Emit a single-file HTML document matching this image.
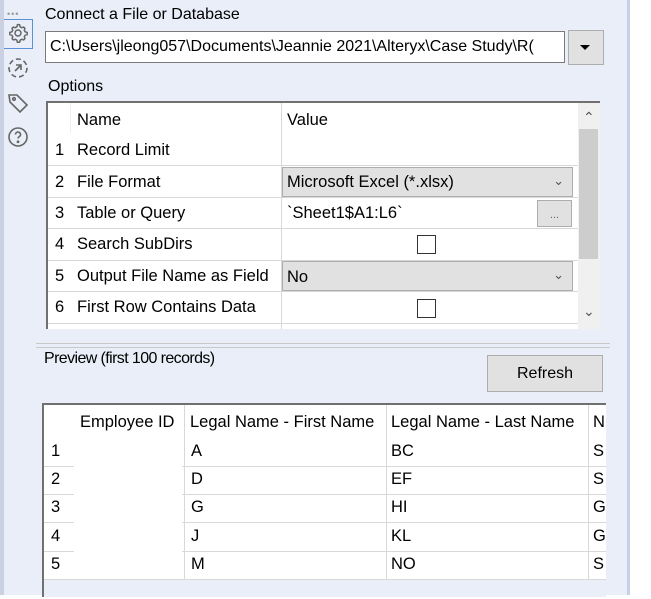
<!DOCTYPE html>
<html><head><style>
body{margin:0;width:651px;height:599px;background:#fff;font-family:"Liberation Sans",sans-serif;font-size:16.5px;color:#000;position:relative;overflow:hidden}
.a{position:absolute}
.bg{left:0;top:0;width:628px;height:595px;background:#e9eef8}
.cell{position:absolute;white-space:nowrap}
.hl{position:absolute;height:1px;background:#d8d8d8}
.vl{position:absolute;width:1px;background:#d8d8d8}
.cb{position:absolute;width:17px;height:17px;border:1px solid #333;background:#fff}
.dd{position:absolute;background:#e1e1e1;border:1px solid #adadad}
</style></head><body>
<div class="a bg"></div>
<div class="a" style="left:0;top:0;width:4px;height:595px;background:#c9d1e2"></div>
<div class="a" style="left:627px;top:0;width:3px;height:595px;background:#c6d0e6"></div>
<div class="a" style="left:7px;top:9px;color:#999;font-size:9px;letter-spacing:1px">•••</div>
<div class="a" style="left:4px;top:19px;width:28px;height:28px;border:1px solid #5b8fd6;border-left:none"></div>
<svg class="a" style="left:6px;top:21px" width="24" height="24" viewBox="0 0 24 24" fill="none" stroke="#666" stroke-width="1.5"><circle cx="12" cy="12" r="3"/><path d="M12 3.5l1.6 .3.5 2 1.6.9 2-.6 1.2 1.2-.6 2 .9 1.6 2 .5v2.2l-2 .5-.9 1.6.6 2-1.2 1.2-2-.6-1.6.9-.5 2h-2.2l-.5-2-1.6-.9-2 .6-1.2-1.2.6-2-.9-1.6-2-.5v-2.2l2-.5.9-1.6-.6-2 1.2-1.2 2 .6 1.6-.9.5-2z"/></svg>
<svg class="a" style="left:6px;top:56px" width="24" height="24" viewBox="0 0 24 24" fill="none" stroke="#666" stroke-width="1.6"><circle cx="12" cy="12" r="9" stroke-dasharray="5 3"/><path d="M9 15l6-6M10 9h5v5"/></svg>
<svg class="a" style="left:6px;top:91px" width="24" height="24" viewBox="0 0 24 24" fill="none" stroke="#666" stroke-width="1.6"><path d="M3 4h8l10 10-7 7L4 11z"/><circle cx="8" cy="8" r="1.3"/></svg>
<svg class="a" style="left:6px;top:125px" width="24" height="24" viewBox="0 0 24 24" fill="none" stroke="#666" stroke-width="1.6"><circle cx="12" cy="12" r="9"/><path d="M9.5 9.5a2.5 2.5 0 1 1 3.5 2.3c-.7.4-1 .9-1 1.7"/><circle cx="12" cy="16.8" r=".6" fill="#666"/></svg>

<div class="a" style="left:45px;top:6px;font-size:16px">Connect a File or Database</div>
<div class="a" style="left:45px;top:31px;width:518px;height:30px;background:#fff;border:1px solid #7a7a7a;overflow:hidden"><div style="padding:6px 0 0 4px;font-size:16px;white-space:nowrap">C:\Users\jleong057\Documents\Jeannie 2021\Alteryx\Case Study\R(</div></div>
<div class="a" style="left:568px;top:30px;width:34px;height:33px;background:#e1e1e1;border:1px solid #adadad"></div>
<div class="a" style="left:580px;top:45px;width:0;height:0;border-left:5px solid transparent;border-right:5px solid transparent;border-top:5px solid #000"></div>

<div class="a" style="left:48px;top:78px;font-size:16px">Options</div>
<div class="a" style="left:46px;top:101px;width:552px;height:226px;background:#fff;border-top:2px solid #707070;border-left:2px solid #707070;overflow:hidden">
 <div class="a" style="left:530px;top:0;width:22px;height:226px;background:#f0f0f0"></div>
 <div class="a" style="left:531px;top:26px;width:19px;height:130px;background:#cdcdcd"></div>
 <div class="a" style="left:535px;top:6px;color:#555;font-size:14px">&#8963;</div>
 <div class="a" style="left:535px;top:200px;color:#555;font-size:14px">&#8964;</div>
 <div class="vl" style="left:233px;top:0;height:226px"></div>
 <div class="vl" style="left:22px;top:0;height:30px;background:#eee"></div>
 <div class="hl" style="left:0;top:62px;width:530px"></div>
 <div class="hl" style="left:0;top:94px;width:530px"></div>
 <div class="hl" style="left:0;top:125px;width:530px"></div>
 <div class="hl" style="left:0;top:157px;width:530px"></div>
 <div class="hl" style="left:0;top:188px;width:530px"></div>
 <div class="hl" style="left:0;top:220px;width:530px"></div>
 <div class="cell" style="left:29px;top:8px">Name</div><div class="cell" style="left:239px;top:8px">Value</div>
 <div class="cell" style="left:7px;top:38px">1</div><div class="cell" style="left:29px;top:38px">Record Limit</div>
 <div class="cell" style="left:7px;top:70px">2</div><div class="cell" style="left:29px;top:70px">File Format</div>
 <div class="dd" style="left:234px;top:64px;width:289px;height:28px"><div style="padding:5px 0 0 4px">Microsoft Excel (*.xlsx)</div><div class="a" style="right:8px;top:5px;color:#555;font-size:13px">&#8964;</div></div>
 <div class="cell" style="left:7px;top:101px">3</div><div class="cell" style="left:29px;top:101px">Table or Query</div>
 <div class="cell" style="left:239px;top:101px">`Sheet1$A1:L6`</div>
 <div class="dd" style="left:489px;top:97px;width:33px;height:25px;text-align:center;font-size:11px;line-height:28px;color:#666">...</div>
 <div class="cell" style="left:7px;top:132px">4</div><div class="cell" style="left:29px;top:132px">Search SubDirs</div>
 <div class="cb" style="left:369px;top:132px"></div>
 <div class="cell" style="left:7px;top:164px">5</div><div class="cell" style="left:29px;top:164px">Output File Name as Field</div>
 <div class="dd" style="left:234px;top:158px;width:289px;height:28px"><div style="padding:6px 0 0 4px">No</div><div class="a" style="right:8px;top:5px;color:#555;font-size:13px">&#8964;</div></div>
 <div class="cell" style="left:7px;top:195px">6</div><div class="cell" style="left:29px;top:195px">First Row Contains Data</div>
 <div class="cb" style="left:369px;top:196px"></div>
</div>

<div class="a" style="left:36px;top:343px;width:574px;height:1px;background:#c8c8c8"></div>
<div class="a" style="left:36px;top:347px;width:574px;height:1px;background:#c8c8c8"></div>
<div class="a" style="left:44px;top:350px;font-size:16px;letter-spacing:-0.6px">Preview (first 100 records)</div>
<div class="a" style="left:487px;top:355px;width:114px;height:35px;background:#e1e1e1;border:1px solid #adadad;text-align:center;line-height:35px;font-size:16px">Refresh</div>

<div class="a" style="left:42px;top:403px;width:562px;height:192px;background:#e9eef8;border-top:2px solid #707070;border-left:2px solid #707070;overflow:hidden">
 <div class="a" style="left:0;top:0;width:562px;height:174px;background:#fff"></div>
 <div class="vl" style="left:140px;top:0;height:174px"></div>
 <div class="vl" style="left:342px;top:0;height:174px"></div>
 <div class="vl" style="left:544px;top:0;height:174px"></div>
 <div class="hl" style="left:0;top:61px;width:562px"></div>
 <div class="hl" style="left:0;top:89px;width:562px"></div>
 <div class="hl" style="left:0;top:117px;width:562px"></div>
 <div class="hl" style="left:0;top:146px;width:562px"></div>
 <div class="hl" style="left:0;top:174px;width:562px"></div>
 <div class="a" style="left:30px;top:61px;width:108px;height:112px;background:#fff"></div>
 <div class="cell" style="left:36px;top:8px">Employee ID</div>
 <div class="cell" style="left:146px;top:8px">Legal Name - First Name</div>
 <div class="cell" style="left:347px;top:8px">Legal Name - Last Name</div>
 <div class="cell" style="left:549px;top:8px">N</div>
 <div class="cell" style="left:7px;top:37px">1</div><div class="cell" style="left:147px;top:37px">A</div><div class="cell" style="left:347px;top:37px">BC</div><div class="cell" style="left:549px;top:37px">S</div>
 <div class="cell" style="left:7px;top:65px">2</div><div class="cell" style="left:147px;top:65px">D</div><div class="cell" style="left:347px;top:65px">EF</div><div class="cell" style="left:549px;top:65px">S</div>
 <div class="cell" style="left:7px;top:93px">3</div><div class="cell" style="left:147px;top:93px">G</div><div class="cell" style="left:347px;top:93px">HI</div><div class="cell" style="left:549px;top:93px">G</div>
 <div class="cell" style="left:7px;top:122px">4</div><div class="cell" style="left:147px;top:122px">J</div><div class="cell" style="left:347px;top:122px">KL</div><div class="cell" style="left:549px;top:122px">G</div>
 <div class="cell" style="left:7px;top:150px">5</div><div class="cell" style="left:147px;top:150px">M</div><div class="cell" style="left:347px;top:150px">NO</div><div class="cell" style="left:549px;top:150px">S</div>
</div>
</body></html>
